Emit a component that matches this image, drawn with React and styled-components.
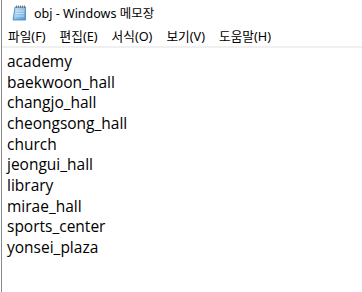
import React from "react";
import styled, { createGlobalStyle } from "styled-components";

const Global = createGlobalStyle`
  html, body { margin: 0; padding: 0; background: #fff; }
  body { font-family: "Noto Sans", "Noto Sans CJK KR", sans-serif; }
`;

const Window = styled.div`
  width: 362px;
  height: 292px;
  box-sizing: border-box;
  border-left: 1px solid #8a8a8a;
  margin-left: 1px;
  background: #fff;
  display: flex;
  flex-direction: column;
  overflow: hidden;
`;

const TitleBar = styled.div`
  height: 25px;
  display: flex;
  align-items: center;
  padding-left: 10px;
  gap: 7px;
  font-size: 12.5px;
  color: #000;
`;

const MenuBar = styled.div`
  height: 21px;
  display: flex;
  align-items: center;
  padding-left: 6px;
  font-size: 12.7px;
  color: #000;
  border-bottom: 2px solid #f0f0f0;
`;

const MenuItem = styled.span`
  padding: 0 14px 0 0;
`;

const Editor = styled.div`
  padding: 3px 0 0 5px;
  font-family: "Open Sans", "Noto Sans", sans-serif;
  font-size: 15.5px;
  line-height: 20.65px;
  color: #000;
`;

const Line = styled.div`
  white-space: pre;
`;

const NotepadIcon = () => (
  <svg width="15" height="16" viewBox="0 0 14 16">
    <defs>
      <linearGradient id="pg" x1="0" y1="0" x2="1" y2="1">
        <stop offset="0" stopColor="#cfe8fa" />
        <stop offset="1" stopColor="#4f9bd8" />
      </linearGradient>
    </defs>
    <path d="M2.5 2 H13 V15 H0.5 Z" fill="url(#pg)" stroke="#4a7fb0" strokeWidth="0.8" />
    <g stroke="#6a6a6a" strokeWidth="0.9">
      <line x1="4" y1="0.5" x2="4" y2="3" />
      <line x1="6" y1="0.5" x2="6" y2="3" />
      <line x1="8" y1="0.5" x2="8" y2="3" />
      <line x1="10" y1="0.5" x2="10" y2="3" />
      <line x1="12" y1="0.5" x2="12" y2="3" />
    </g>
    <g stroke="#ffffff" strokeWidth="0.7" opacity="0.8">
      <line x1="3.5" y1="6" x2="11.5" y2="6" />
      <line x1="3" y1="8.5" x2="11.5" y2="8.5" />
      <line x1="2.5" y1="11" x2="11.5" y2="11" />
    </g>
  </svg>
);

const lines = [
  "academy",
  "baekwoon_hall",
  "changjo_hall",
  "cheongsong_hall",
  "church",
  "jeongui_hall",
  "library",
  "mirae_hall",
  "sports_center",
  "yonsei_plaza",
];

const menus = ["파일(F)", "편집(E)", "서식(O)", "보기(V)", "도움말(H)"];

export default function App() {
  return (
    <>
      <Global />
      <Window>
        <TitleBar>
          <NotepadIcon />
          <span>obj - Windows 메모장</span>
        </TitleBar>
        <MenuBar>
          {menus.map((m) => (
            <MenuItem key={m}>{m}</MenuItem>
          ))}
        </MenuBar>
        <Editor>
          {lines.map((l) => (
            <Line key={l}>{l}</Line>
          ))}
        </Editor>
      </Window>
    </>
  );
}
